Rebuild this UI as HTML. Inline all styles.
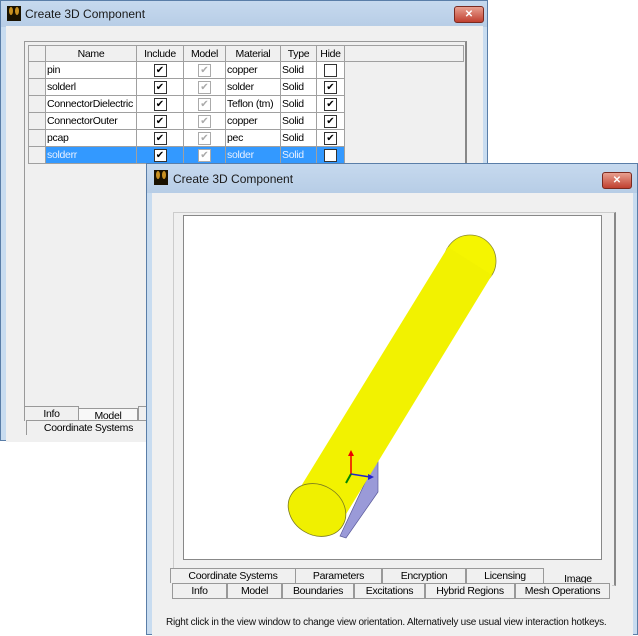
<!DOCTYPE html>
<html><head><style>
body{margin:0;width:638px;height:635px;background:#fff;position:relative;overflow:hidden;font-family:"Liberation Sans",sans-serif;font-size:11px;color:#000}
.win{position:absolute;background:#c8dcf0;border:1px solid #5a7ea8;box-sizing:border-box}
.title{position:absolute;left:0;right:0;top:0;height:26px;background:linear-gradient(#c6d9ee,#b7cde6)}
.title span{position:absolute;left:24px;top:6px;font-size:12px;color:#1a1a1a}
.icon{position:absolute;left:6px;top:5px;width:14px;height:15px;background:#1a1200}
.icon:before{content:"";position:absolute;left:2px;top:1px;width:4px;height:8px;border-radius:50%;background:#c89020;box-shadow:6px 0 0 #c89020}
.close{position:absolute;top:5px;width:28px;height:15px;border-radius:3px;background:linear-gradient(#e8a090,#c04030);border:1px solid #7a2a20;color:#fff;font-size:10px;text-align:center;line-height:15px;font-weight:bold}
.client{position:absolute;background:#f0f0f0}
table{border-collapse:collapse;position:absolute;table-layout:fixed}
td{border:1px solid #a0a0a0;height:16px;padding:0 1px;font-size:10.5px;letter-spacing:-0.3px;white-space:nowrap;overflow:hidden;background:#fff}
th{border:1px solid #a0a0a0;height:15px;font-weight:normal;background:#f0f0f0;font-size:10.5px;letter-spacing:-0.3px;overflow:hidden;padding:0}
td.rh{background:#f0f0f0}
.cb{display:inline-block;width:11px;height:11px;border:1px solid #333;background:#fff;color:#000;font-size:10px;line-height:11px;text-align:center;vertical-align:middle;letter-spacing:0}
.cb.g{border-color:#aaa;color:#aaa}
tr.sel td{background:#3399ff;color:#e8f0ff}
tr.sel td.rh, tr.sel td.e{background:#f0f0f0}
td.e{border:none;background:#f0f0f0}
.tab{position:absolute;height:15px;border:1px solid #999;border-bottom:none;background:#f0f0f0;text-align:center;font-size:10.5px;letter-spacing:-0.3px;line-height:15px;box-sizing:border-box;white-space:nowrap}
</style></head><body>

<div class="win" style="left:0;top:0;width:488px;height:441px">
 <div class="title"><div class="icon"></div><span>Create 3D Component</span><div class="close" style="left:453px">✕</div></div>
 <div class="client" style="left:5px;top:25px;width:477px;height:416px">
  <div style="position:absolute;left:18px;top:15px;width:440px;height:375px;border:1px solid #999;border-right:2px solid #888"></div>
  <table style="left:22px;top:19px;width:435px">
   <col style="width:17px"><col style="width:91px"><col style="width:47px"><col style="width:42px"><col style="width:55px"><col style="width:36px"><col style="width:28px"><col style="width:119px">
   <tr><th></th><th>Name</th><th>Include</th><th>Model</th><th>Material</th><th>Type</th><th>Hide</th><th></th></tr>
   <tr><td class="rh"></td><td>pin</td><td align=center><span class="cb">✔</span></td><td align=center><span class="cb g">✔</span></td><td>copper</td><td>Solid</td><td align=center><span class="cb"></span></td><td class="e"></td></tr>
   <tr><td class="rh"></td><td>solderl</td><td align=center><span class="cb">✔</span></td><td align=center><span class="cb g">✔</span></td><td>solder</td><td>Solid</td><td align=center><span class="cb">✔</span></td><td class="e"></td></tr>
   <tr><td class="rh"></td><td>ConnectorDielectric</td><td align=center><span class="cb">✔</span></td><td align=center><span class="cb g">✔</span></td><td>Teflon (tm)</td><td>Solid</td><td align=center><span class="cb">✔</span></td><td class="e"></td></tr>
   <tr><td class="rh"></td><td>ConnectorOuter</td><td align=center><span class="cb">✔</span></td><td align=center><span class="cb g">✔</span></td><td>copper</td><td>Solid</td><td align=center><span class="cb">✔</span></td><td class="e"></td></tr>
   <tr><td class="rh"></td><td>pcap</td><td align=center><span class="cb">✔</span></td><td align=center><span class="cb g">✔</span></td><td>pec</td><td>Solid</td><td align=center><span class="cb">✔</span></td><td class="e"></td></tr>
   <tr class="sel"><td class="rh"></td><td>solderr</td><td align=center><span class="cb">✔</span></td><td align=center><span class="cb g">✔</span></td><td>solder</td><td>Solid</td><td align=center><span class="cb"></span></td><td class="e"></td></tr>
  </table>
  <div class="tab" style="left:18px;top:380px;width:55px">Info</div>
  <div class="tab" style="left:72px;top:382px;width:60px;background:#f8f8f8">Model</div>
  <div class="tab" style="left:132px;top:380px;width:20px"></div>
  <div class="tab" style="left:20px;top:394px;width:125px">Coordinate Systems</div>
 </div>
</div>

<div class="win" style="left:146px;top:163px;width:492px;height:472px">
 <div class="title" style="height:29px"><div class="icon" style="left:7px;top:6px"></div><span style="left:26px;top:8px">Create 3D Component</span><div class="close" style="left:455px;top:8px">✕</div></div>
 <div class="client" style="left:5px;top:29px;width:481px;height:443px">
  <div style="position:absolute;left:21px;top:19px;width:440px;height:372px;border:1px solid #ccc;border-right:2px solid #888"></div>
  <div style="position:absolute;left:31px;top:22px;width:417px;height:343px;background:#fff;border:1px solid #888"></div>
  <div class="tab" style="left:18px;top:375px;width:126px">Coordinate Systems</div>
  <div class="tab" style="left:143px;top:375px;width:87px">Parameters</div>
  <div class="tab" style="left:230px;top:375px;width:84px">Encryption</div>
  <div class="tab" style="left:314px;top:375px;width:78px">Licensing</div>
  <div class="tab" style="left:392px;top:378px;width:68px;border:none;line-height:16px">Image</div>
  <div class="tab" style="left:20px;top:390px;width:55px;border-bottom:1px solid #999;height:16px">Info</div>
  <div class="tab" style="left:75px;top:390px;width:55px;border-bottom:1px solid #999;height:16px">Model</div>
  <div class="tab" style="left:130px;top:390px;width:72px;border-bottom:1px solid #999;height:16px">Boundaries</div>
  <div class="tab" style="left:202px;top:390px;width:71px;border-bottom:1px solid #999;height:16px">Excitations</div>
  <div class="tab" style="left:273px;top:390px;width:90px;border-bottom:1px solid #999;height:16px">Hybrid Regions</div>
  <div class="tab" style="left:363px;top:390px;width:95px;border-bottom:1px solid #999;height:16px">Mesh Operations</div>
  <div style="position:absolute;left:14px;top:424px;font-size:10px;letter-spacing:-0.25px;white-space:nowrap;color:#111">Right click in the view window to change view orientation. Alternatively use usual view interaction hotkeys.</div>
 </div>
</div>

<svg style="position:absolute;left:0;top:0" width="638" height="635">
 <polygon points="340,536 346,538 378,492 378,455" fill="#9a9ad8" stroke="#5a5a9a" stroke-width="0.7"/>
 <circle cx="470" cy="261" r="26" fill="#f5f500" stroke="#8a8a30" stroke-width="0.8"/>
 <polygon points="295,496 340,524 492,275 448,247" fill="#f2f200"/>
 <ellipse cx="317" cy="510" rx="30" ry="25" transform="rotate(31 317 510)" fill="#f0f000" stroke="#7a7a20" stroke-width="0.8"/>
 <line x1="351" y1="474" x2="351" y2="454" stroke="#e00" stroke-width="1.5"/><polygon points="348,456 354,456 351,450" fill="#e00"/>
 <line x1="351" y1="474" x2="370" y2="477" stroke="#22c" stroke-width="1.5"/><polygon points="368,474 368,480 374,477" fill="#22c"/>
 <line x1="351" y1="474" x2="346" y2="483" stroke="#080" stroke-width="2"/>
</svg>
</body></html>
